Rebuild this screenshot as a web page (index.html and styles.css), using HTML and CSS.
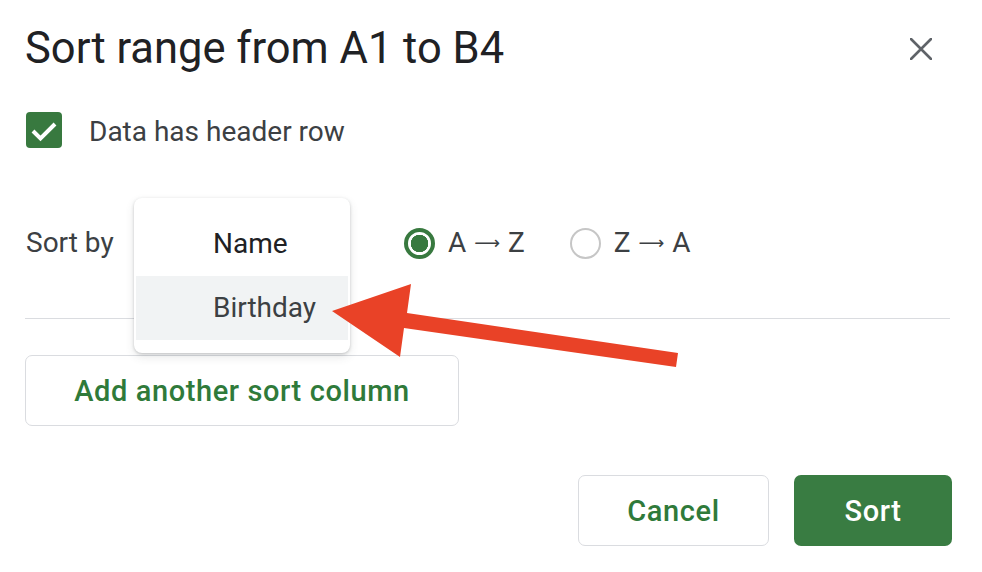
FILE: index.html
```html
<!DOCTYPE html>
<html lang="en">
<head>
<meta charset="utf-8">
<title>Sort range</title>
<link rel="stylesheet" href="styles.css">
</head>
<body>
<div class="dialog">
  <header class="head">
    <h1 class="title">Sort range from A1 to B4</h1>
    <button class="close" aria-label="Close">
      <svg width="22" height="22" viewBox="0 0 22 22"><path d="M1 1L21 21M21 1L1 21" stroke="#5f6368" stroke-width="2.6" stroke-linecap="round" fill="none"/></svg>
    </button>
  </header>

  <label class="check">
    <span class="box">
      <svg width="36" height="36" viewBox="0 0 36 36"><path d="M7 19L14.5 26.5L29 12" stroke="#fff" stroke-width="4" fill="none"/></svg>
    </span>
    <span class="check-text">Data has header row</span>
  </label>

  <div class="sortrow">
    <span class="label">Sort by</span>
    <div class="picker">
      <ul class="menu">
        <li class="item item-selected">Name</li>
        <li class="item item-hover">Birthday</li>
      </ul>
    </div>
    <div class="radios">
      <label class="radio"><span class="dot dot-on"></span><span>A <span class="arr">⟶</span> Z</span></label>
      <label class="radio"><span class="dot"></span><span>Z <span class="arr">⟶</span> A</span></label>
    </div>
  </div>

  <div class="divider"></div>

  <button class="btn btn-add">Add another sort column</button>

  <footer class="actions">
    <button class="btn btn-cancel">Cancel</button>
    <button class="btn btn-primary">Sort</button>
  </footer>
</div>

<svg class="pointer" width="982" height="572" viewBox="0 0 982 572">
  <polygon points="332,311 411,284 407,313 678,353 676,367 404,328 400,357" fill="#e94227"/>
</svg>
</body>
</html>
```

FILE: styles.css
```css
* { box-sizing: border-box; }

html, body {
  margin: 0;
  padding: 0;
  background: #fff;
}

body {
  font-family: Roboto, "Liberation Sans", Arial, sans-serif;
  color: #3c4043;
  width: 982px;
  height: 572px;
  overflow: hidden;
  position: relative;
}

.dialog {
  padding: 23px 30px 0 25px;
  display: flex;
  flex-direction: column;
}

.head {
  display: flex;
  align-items: center;
  justify-content: space-between;
  height: 52px;
}

.title {
  margin: 0;
  font-size: 43.5px;
  line-height: 52px;
  font-weight: 400;
  color: #202124;
}

.close {
  border: 0;
  background: none;
  padding: 0;
  margin-right: 20px;
  width: 22px;
  height: 22px;
  display: flex;
}

.check {
  margin-top: 37px;
  display: flex;
  align-items: center;
  height: 36px;
  padding-left: 1px;
}

.box {
  width: 36px;
  height: 36px;
  border-radius: 4px;
  background: #38793f;
  display: flex;
}

.check-text {
  margin-left: 27px;
  font-size: 28px;
  line-height: 36px;
  padding-top: 3px;
}

.sortrow {
  margin-top: 77px;
  display: flex;
  align-items: center;
  height: 36px;
  padding-left: 1px;
}

.label {
  font-size: 28px;
  line-height: 36px;
  width: 108px;
  flex: none;
}

.picker {
  position: relative;
  width: 270px;
  height: 36px;
  flex: none;
}

.menu {
  position: absolute;
  left: 0;
  top: -27px;
  width: 216px;
  margin: 0;
  padding: 14px 2px 13px;
  list-style: none;
  background: #fff;
  border-radius: 8px;
  box-shadow: 0 1px 3px rgba(60, 64, 67, 0.25), 0 4px 10px rgba(60, 64, 67, 0.12);
  z-index: 2;
}

.item {
  height: 64px;
  line-height: 64px;
  font-size: 28px;
  padding-left: 77px;
}

.item-selected {
  color: #202124;
}

.item-hover {
  background: #f1f3f4;
}

.radios {
  display: flex;
  align-items: center;
  gap: 45px;
}

.radio {
  display: flex;
  align-items: center;
  gap: 13px;
  font-size: 28px;
  line-height: 36px;
  word-spacing: 1px;
}

.arr {
  font-family: "DejaVu Sans", sans-serif;
  font-size: 18px;
  vertical-align: 3px;
}

.dot {
  width: 31px;
  height: 31px;
  border-radius: 50%;
  border: 2px solid #c6c6c6;
  flex: none;
}

.dot-on {
  border: 4px solid #38793f;
  background: radial-gradient(circle, #38793f 0 8.5px, #fff 9px);
}

.divider {
  margin-top: 57px;
  height: 1px;
  background: #dadce0;
  margin-right: 2px;
}

.btn {
  font-family: Roboto, "Liberation Sans", Arial, sans-serif;
  font-size: 29px;
  letter-spacing: 0.6px;
  font-weight: 500;
  border-radius: 7px;
  height: 71px;
  cursor: pointer;
}

.btn-add {
  margin-top: 36px;
  width: 434px;
  background: #fff;
  border: 1.5px solid #dadce0;
  color: #2f7a3a;
}

.actions {
  margin-top: 49px;
  display: flex;
  justify-content: flex-end;
  gap: 25px;
}

.btn-cancel {
  width: 191px;
  background: #fff;
  border: 1.5px solid #dadce0;
  color: #2f7a3a;
}

.btn-primary {
  width: 158px;
  background: #397c42;
  border: 0;
  color: #fff;
}

.pointer {
  position: absolute;
  left: 0;
  top: 0;
  pointer-events: none;
  z-index: 5;
}
```
